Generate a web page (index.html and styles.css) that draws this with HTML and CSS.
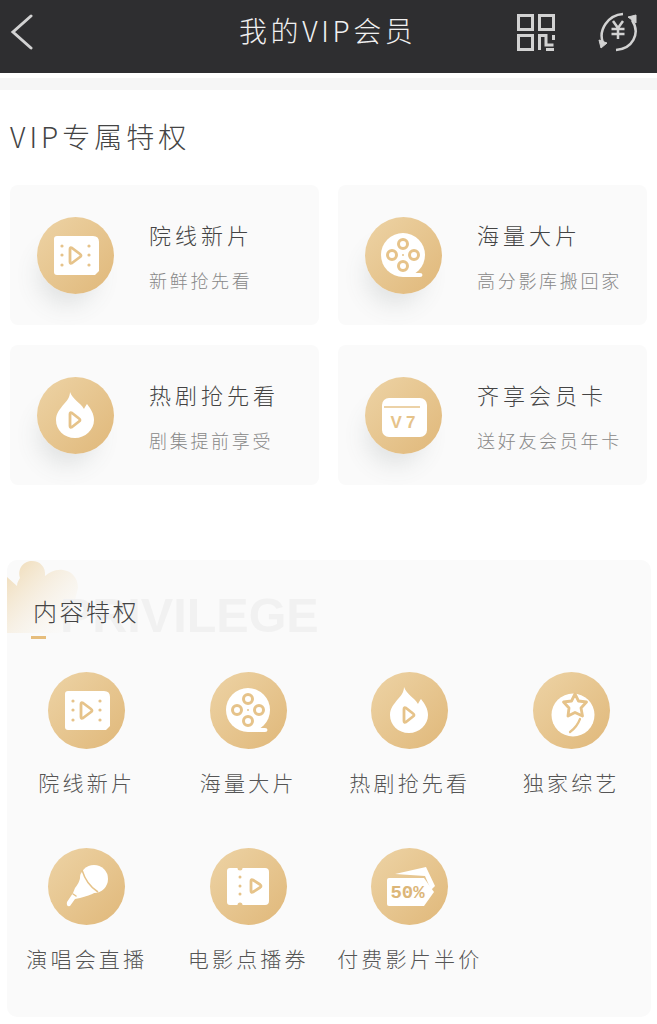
FILE: index.html
```html
<!DOCTYPE html>
<html lang="zh-CN">
<head>
  <meta charset="UTF-8" />
  <title>我的VIP会员</title>
  <meta name="viewport" content="width=device-width, initial-scale=1.0"/>
  <link rel="stylesheet" href="styles.css">
</head>
<body>

  <!-- icon set -->
  <svg class="sprite" width="0" height="0">
    <symbol id="i-film" viewBox="0 0 77 77">
      <path d="M20 19H56Q62 19 62 25V54L58 58H20Q17 58 17 55V22Q17 19 20 19Z" fill="#fff"/>
      <g fill="#e6c38a"><circle cx="25" cy="29" r="1.600"/><circle cx="25" cy="38" r="1.600"/><circle cx="25" cy="48" r="1.600"/><circle cx="52" cy="29" r="1.600"/><circle cx="52" cy="38" r="1.600"/><circle cx="52" cy="48" r="1.600"/></g>
      <path d="M33 32Q33 30 35 31L43 37Q45 38.500 43 40L35 46Q33 47 33 45Z" fill="none" stroke="#e6c38a" stroke-width="2.800" stroke-linejoin="round"/>
    </symbol>
    <symbol id="i-reel" viewBox="0 0 77 77">
      <circle cx="38" cy="38" r="22" fill="#fff"/>
      <path d="M38 56H55Q57.500 56 57.500 58T55 60H38Z" fill="#fff"/>
      <g fill="none" stroke="#e6c38a" stroke-width="3"><circle cx="38" cy="27" r="4.500"/><circle cx="27" cy="38" r="4.500"/><circle cx="49" cy="38" r="4.500"/><circle cx="38" cy="49" r="4.500"/></g>
      <circle cx="38" cy="38" r="1" fill="#e6c38a"/>
    </symbol>
    <symbol id="i-fire" viewBox="0 0 77 77">
      <path d="M33 15C36 23 43 25 47 32C48 30 49 28 50 27C54 32 57 37 57 43C57 53 48 61 38 61C27 61 19 53 19 43C19 36 23 32 27 27C30 24 33 20 33 15Z" fill="#fff"/>
      <path d="M33 37Q33 35 35 36L42 41.500Q44 43 42 44.500L35 50Q33 51 33 49Z" fill="none" stroke="#e6c38a" stroke-width="2.800" stroke-linejoin="round"/>
    </symbol>
    <symbol id="i-star" viewBox="0 0 77 77">
      <circle cx="40" cy="43" r="21.500" fill="#fff"/>
      <path d="M42 22L45.500 29L53.500 30L48 36L49.500 44L42 40.500L35 44L36 36L30.500 30L38.500 29Z" fill="#fff" stroke="#e6c38a" stroke-width="2.800" stroke-linejoin="round"/>
      <path d="M47 47Q44 55 37 60" fill="none" stroke="#e6c38a" stroke-width="2.200" stroke-linecap="round"/>
    </symbol>
    <symbol id="i-mic" viewBox="0 0 77 77">
      <circle cx="46" cy="31" r="14" fill="#fff"/>
      <path d="M33 25C32 32 31 35 27 40L25 45L19 54Q18 59 22 58L27 51L32 50C38 48 43 47 48 44Z" fill="#fff"/>
      <path d="M34 22C37 32 42 39 50 44" fill="none" stroke="#e6c38a" stroke-width="1.500"/>
      <path d="M25 46L28 48" stroke="#e6c38a" stroke-width="1.500" stroke-linecap="round"/>
    </symbol>
    <symbol id="i-ticket" viewBox="0 0 77 77">
      <path d="M20 20H27.500A2.500 2.500 0 0 0 32.500 20H55Q59 20 59 24V53Q59 57 55 57H32.500A2.500 2.500 0 0 0 27.500 57H20Q17 57 17 54V23Q17 20 20 20Z" fill="#fff"/>
      <g fill="#e6c38a"><circle cx="30" cy="29" r="1.500"/><circle cx="30" cy="38" r="1.500"/><circle cx="30" cy="46" r="1.500"/></g>
      <path d="M41 33Q41 31 43 32L50 36.500Q52 38 50 39.500L43 44Q41 45 41 43Z" fill="none" stroke="#e6c38a" stroke-width="2.800" stroke-linejoin="round"/>
    </symbol>
  </svg>

  <header class="topbar">
    <svg class="back" width="26" height="36" viewBox="0 0 26 36"><path d="M22 2L4 18L22 34" fill="none" stroke="#d2d2d2" stroke-width="3" stroke-linecap="round"/></svg>
    <h1 class="topbar-title">我的VIP会员</h1>
    <div class="topbar-actions">
      <svg width="38" height="37" viewBox="0 0 38 37" fill="none" stroke="#d2d2d2" stroke-width="3">
        <rect x="1.500" y="1.500" width="14" height="14"/>
        <rect x="22.500" y="1.500" width="14" height="14"/>
        <rect x="1.500" y="21.500" width="14" height="14"/>
        <path d="M22.500 36V21.500H29V31H36.500M36.500 21V26M29 35.500H37"/>
      </svg>
      <svg width="42" height="40" viewBox="0 0 42 40" fill="none" stroke="#d2d2d2" stroke-width="2.500">
        <path d="M25 2C10 3 0 18 5 31"/>
        <path d="M34 8C43 22 34 37 18 38"/>
        <path d="M30 5L38 3V11Z" fill="#d2d2d2" stroke-width="1"/>
        <path d="M1 28L9 31L3 36Z" fill="#d2d2d2" stroke-width="1"/>
        <path d="M15 9L20 16L25 9M13.500 17H26.500M13.500 22H26.500M20 16V27"/>
      </svg>
    </div>
  </header>
  <div class="strip"></div>

  <h2 class="vip-title">VIP专属特权</h2>

  <div class="vip-grid">
    <div class="vip-card">
      <div class="disc shadow"><svg><use href="#i-film"/></svg></div>
      <div><div class="vip-name">院线新片</div><div class="vip-sub">新鲜抢先看</div></div>
    </div>
    <div class="vip-card">
      <div class="disc shadow"><svg><use href="#i-reel"/></svg></div>
      <div><div class="vip-name">海量大片</div><div class="vip-sub">高分影库搬回家</div></div>
    </div>
    <div class="vip-card">
      <div class="disc shadow"><svg><use href="#i-fire"/></svg></div>
      <div><div class="vip-name">热剧抢先看</div><div class="vip-sub">剧集提前享受</div></div>
    </div>
    <div class="vip-card">
      <div class="disc shadow">
        <svg viewBox="0 0 77 77">
          <rect x="17" y="21" width="45" height="39" rx="7" fill="#fff"/>
          <path d="M19 30H55" stroke="#e6c38a" stroke-width="1.500"/>
          <text class="card-text" x="40" y="51" text-anchor="middle">V7</text>
        </svg>
      </div>
      <div><div class="vip-name">齐享会员卡</div><div class="vip-sub">送好友会员年卡</div></div>
    </div>
  </div>

  <section class="panel">
    <svg class="panel-blob" width="72" height="73" viewBox="0 0 72 73">
      <defs>
        <linearGradient id="blobFade" x1="0" y1="0" x2="1" y2="1">
          <stop offset="0" stop-color="#efd9b2"/>
          <stop offset="0.7" stop-color="#f8f3ea" stop-opacity="0.5"/>
          <stop offset="1" stop-color="#fafafa" stop-opacity="0"/>
        </linearGradient>
      </defs>
      <path d="M0 17L10 26C10 22 12 20 13 18C10 8 17 1 25 1C33 1 39 7 38 16C42 13 48 9 56 10C65 11 71 18 71 28L60 73H0Z" fill="url(#blobFade)"/>
    </svg>
    <div class="panel-mark">PRIVILEGE</div>
    <h3 class="panel-title">内容特权</h3>
    <div class="panel-rule"></div>
    <div class="perk-grid">
      <div class="perk"><div class="disc"><svg><use href="#i-film"/></svg></div><div class="perk-name">院线新片</div></div>
      <div class="perk"><div class="disc"><svg><use href="#i-reel"/></svg></div><div class="perk-name">海量大片</div></div>
      <div class="perk"><div class="disc"><svg><use href="#i-fire"/></svg></div><div class="perk-name">热剧抢先看</div></div>
      <div class="perk"><div class="disc"><svg><use href="#i-star"/></svg></div><div class="perk-name">独家综艺</div></div>
      <div class="perk"><div class="disc"><svg><use href="#i-mic"/></svg></div><div class="perk-name">演唱会直播</div></div>
      <div class="perk"><div class="disc"><svg><use href="#i-ticket"/></svg></div><div class="perk-name">电影点播券</div></div>
      <div class="perk">
        <div class="disc">
          <svg viewBox="0 0 77 77">
            <path d="M24 26L55 19L64 38L60 42L54 28Z" fill="#fff"/>
            <path d="M18 30H53L63 44L53 58H18Q16 58 16 56V32Q16 30 18 30Z" fill="#fff"/>
            <text class="tag-text" x="36.500" y="50" text-anchor="middle">50%</text>
          </svg>
        </div>
        <div class="perk-name">付费影片半价</div>
      </div>
    </div>
  </section>

</body>
</html>
```

FILE: styles.css
```css
* { margin: 0; padding: 0; box-sizing: border-box; }
body {
  background: #fff;
  font-family: "Noto Sans CJK SC", "Noto Sans", sans-serif;
  font-weight: 300;
  color: #444;
  overflow: hidden;
}
h1, h2, h3 { font-weight: 300; }
.sprite { position: absolute; }

/* Top bar */
.topbar {
  height: 73px;
  background: #2e2e30;
  display: flex;
  align-items: center;
  padding: 0 17px 9px 9px;
  position: relative;
}
.topbar-title {
  position: absolute;
  left: 239px;
  top: 10px;
  font-size: 28px;
  line-height: 40px;
  letter-spacing: 3.600px;
  color: #f0f0f0;
  white-space: nowrap;
}
.topbar-actions {
  margin-left: auto;
  display: flex;
  align-items: center;
  gap: 43px;
}
.strip {
  height: 12px;
  margin-top: 5px;
  background: #f6f6f6;
}

/* VIP cards */
.vip-title {
  margin: 26px 0 0 10px;
  font-size: 28px;
  line-height: 40px;
  letter-spacing: 4px;
  color: #444;
}
.vip-grid {
  margin: 29px 10px 0;
  display: grid;
  grid-template-columns: 309px 309px;
  grid-auto-rows: 140px;
  gap: 20px 19px;
}
.vip-card {
  background: #fafafa;
  border-radius: 8px;
  display: flex;
  align-items: center;
  padding: 0 0 0 27px;
  gap: 35px;
}
.vip-name {
  font-size: 22px;
  line-height: 32px;
  letter-spacing: 4px;
  color: #444;
  white-space: nowrap;
}
.vip-sub {
  margin-top: 17px;
  font-size: 18px;
  line-height: 26px;
  letter-spacing: 2.700px;
  color: #888;
  white-space: nowrap;
}

/* Gold disc holding an icon */
.disc {
  width: 77px;
  height: 77px;
  flex: none;
  border-radius: 50%;
  background: linear-gradient(135deg, #edd3a5 0%, #e0b87a 100%);
}
.disc svg { width: 77px; height: 77px; display: block; }
.shadow { box-shadow: -8px 20px 24px -10px rgba(90, 100, 100, 0.16); }
.card-text {
  font-family: "Liberation Sans", sans-serif;
  font-weight: 700;
  font-size: 17px;
  letter-spacing: 4px;
  fill: #e6c38a;
}
.tag-text {
  font-family: "Liberation Mono", monospace;
  font-weight: 700;
  font-size: 19px;
  fill: #dcb678;
}

/* Content panel */
.panel {
  margin: 75px 6px 0 7px;
  height: 457px;
  background: #fafafa;
  border-radius: 10px;
  position: relative;
}
.panel-blob {
  position: absolute;
  left: 0;
  top: 0;
}
.panel-mark {
  position: absolute;
  left: 53px;
  top: 28px;
  font-family: "Liberation Sans", sans-serif;
  font-weight: 700;
  font-size: 48.500px;
  line-height: 54px;
  color: #f1f1f1;
}
.panel-title {
  position: relative;
  padding: 33px 0 0 26px;
  font-size: 24px;
  line-height: 36px;
  letter-spacing: 2.500px;
  color: #444;
}
.panel-rule {
  position: relative;
  width: 15px;
  height: 3px;
  margin: 7px 0 0 24px;
  background: #e6bd7c;
}
.perk-grid {
  margin: 33px 0 0 -1px;
  display: grid;
  grid-template-columns: repeat(4, 161.5px);
  grid-auto-rows: 176px;
}
.perk {
  display: flex;
  flex-direction: column;
  align-items: center;
}
.perk-name {
  margin-top: 17px;
  font-size: 21px;
  line-height: 32px;
  letter-spacing: 3.200px;
  color: #555;
  white-space: nowrap;
}
```
